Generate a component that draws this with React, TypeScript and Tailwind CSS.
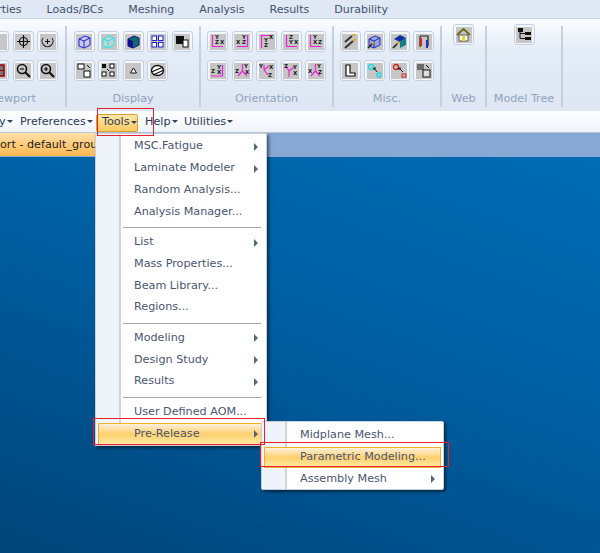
import React from "react";

const F = "font-['DejaVu_Sans',sans-serif]";

function Glyph({ children }: { children?: React.ReactNode }) {
  return (
    <svg viewBox="0 0 15 15" className="w-[15px] h-[15px]" shapeRendering="geometricPrecision">
      {children}
    </svg>
  );
}

function Btn({ children }: { children?: React.ReactNode }) {
  return (
    <div className="w-[21px] h-[21px] shrink-0 rounded-[3px] border border-[#c2d0e4] bg-[#f3f6fb] flex items-center justify-center">
      <div className="w-[16px] h-[16px] bg-[#c6c6c6] flex items-center justify-center">
        <Glyph>{children}</Glyph>
      </div>
    </div>
  );
}

type P = [string, number, number];
function Axis({ l, shape }: { l: P[]; shape: string }) {
  return (
    <>
      <path d={shape} fill="none" stroke="#f020e0" strokeWidth="1.2" />
      {l.map(([t, x, y], i) => (
        <text key={i} x={x} y={y} fontSize="5.5" fontFamily="DejaVu Sans" fontWeight="700" fill="#181818">{t}</text>
      ))}
    </>
  );
}

const cube = (stroke: string, fill: string) => (
  <>
    <path d="M2 5 L8 2 L13 4 L13 11 L7 14 L2 12 Z" fill={fill} stroke={stroke} strokeWidth="1" />
    <path d="M2 5 L7 7 L13 4 M7 7 L7 14" fill="none" stroke={stroke} strokeWidth="1" />
  </>
);

const row1Left = [
  <><circle cx="2" cy="7" r="5" fill="none" stroke="#2030c0" strokeWidth="1.5" /></>,
  <><circle cx="7.5" cy="7.5" r="4" fill="none" stroke="#111" strokeWidth="1.2" /><path d="M7.5 1V14M1 7.5H14" stroke="#111" strokeWidth="1.2" /></>,
  <><path d="M3 4A5.5 5.5 0 1 0 12 4" fill="none" stroke="#333" strokeWidth="1.2" /><path d="M7.5 5V10M5 7.5H10" stroke="#111" strokeWidth="1" /></>,
];
const row2Left = [
  <><rect x="0" y="2" width="13" height="11" fill="#777" stroke="#900" strokeWidth="1.5" /><path d="M0 7.5H13" stroke="#900" /></>,
  <><circle cx="6" cy="6" r="4.5" fill="none" stroke="#111" strokeWidth="1.6" /><path d="M9 9L14 14" stroke="#111" strokeWidth="2.2" /><path d="M4 6H8" stroke="#111" strokeWidth="1.2" /></>,
  <><circle cx="6" cy="6" r="4.5" fill="none" stroke="#111" strokeWidth="1.6" /><path d="M9 9L14 14" stroke="#111" strokeWidth="2.2" /><path d="M4 6H8M6 4V8" stroke="#111" strokeWidth="1.2" /></>,
];

const display1 = [
  cube("#2020e0", "#c8c8e8"),
  cube("#20e8e8", "#c0d4d4"),
  <><path d="M2 5 L8 2 L13 4 L13 11 L7 14 L2 12 Z" fill="#0a6a70" stroke="#101080" /><path d="M2 5 L7 7 L7 14 L2 12 Z" fill="#101090" /></>,
  <><rect x="2" y="2" width="4.5" height="4.5" fill="#fff" stroke="#2020e0" /><rect x="8.5" y="2" width="4.5" height="4.5" fill="#fff" stroke="#2020e0" /><rect x="2" y="8.5" width="4.5" height="4.5" fill="#fff" stroke="#2020e0" /><rect x="8.5" y="8.5" width="4.5" height="4.5" fill="#fff" stroke="#2020e0" /></>,
  <><rect x="1" y="2" width="8" height="8" fill="#111" /><rect x="8" y="6" width="5" height="7" fill="#fff" stroke="#111" /></>,
];
const display2 = [
  <><rect x="1" y="1" width="6" height="5" fill="#fff" stroke="#111" /><rect x="7" y="8" width="6" height="6" fill="#fff" stroke="#111" /><path d="M10 2L13 5" stroke="#111" /></>,
  <><rect x="1" y="1" width="4" height="4" fill="#111" /><rect x="9" y="1" width="4" height="4" fill="#fff" stroke="#111" /><rect x="1" y="9" width="4" height="4" fill="#fff" stroke="#111" /><rect x="9" y="9" width="4" height="4" fill="#fff" stroke="#111" /><path d="M6 6L8 8" stroke="#111" /></>,
  <path d="M7.5 5L10.5 10H4.5Z" fill="#fff" stroke="#111" />,
  <><ellipse cx="7.5" cy="7.5" rx="6" ry="5" fill="#fff" stroke="#111" strokeWidth="1.3" /><path d="M1.5 9L13 4M3 12L14 7" stroke="#111" strokeWidth="1.3" /></>,
];

const orient1 = [
  <Axis l={[["Y", 5, 5], ["Z", 5, 10], ["X", 10, 10]]} shape="M2.5 1V12.5H13" />,
  <Axis l={[["Y", 7, 5], ["X", 1, 10], ["Z", 7, 10]]} shape="M12.5 1V12.5H2" />,
  <Axis l={[["X", 10, 5], ["Y", 5, 8], ["Z", 5, 13]]} shape="M13 1.5H2.5V14" />,
  <Axis l={[["Z", 5, 5], ["Y", 5, 10], ["X", 10, 10]]} shape="M2.5 1V12.5H13" />,
  <Axis l={[["Y", 5, 5], ["X", 5, 10], ["Z", 10, 10]]} shape="M2.5 1V12.5H13" />,
];
const orient2 = [
  <Axis l={[["Y", 7, 6], ["Z", 1, 10], ["X", 7, 11]]} shape="M12.5 2V13H1" />,
  <Axis l={[["Y", 9, 5], ["Z", 0, 10], ["X", 10, 11]]} shape="M7.5 8L3 13M7.5 8L12 13M7.5 8V1" />,
  <Axis l={[["Y", 0, 5], ["X", 10, 6], ["Z", 9, 14]]} shape="M5 7L9 12M5 7V2M5 7L10 3" />,
  <Axis l={[["Z", 0, 5], ["Y", 9, 6], ["X", 9, 12]]} shape="M5 8L2 3M5 8V14M5 8L10 4" />,
  <Axis l={[["Y", 9, 5], ["X", 0, 10], ["Z", 10, 11]]} shape="M7.5 8L3 13M7.5 8L12 13M7.5 8V1" />,
];

const misc1 = [
  <><path d="M2 8L9 2" stroke="#333" strokeWidth="2" /><path d="M9 2L12 0" stroke="#e0a020" strokeWidth="1.6" /><path d="M2 14L10 7" stroke="#333" strokeWidth="2" /><path d="M10 7L13 5" stroke="#e0a020" strokeWidth="1.6" /></>,
  <>{cube("#2030b0", "#9aa4e8")}<path d="M1 14L6 9" stroke="#222" strokeWidth="1.6" /><path d="M5 10L7 8" stroke="#e0a020" strokeWidth="1.8" /></>,
  <><path d="M2 5L8 1L14 4L8 8Z" fill="#1030a0" /><path d="M8 8L14 4V11L8 14Z" fill="#108080" /><path d="M1 14L6 9" stroke="#222" strokeWidth="1.6" /><path d="M5 10L7 8" stroke="#e0a020" strokeWidth="1.8" /></>,
  <><path d="M4 2H12V12" fill="none" stroke="#222" strokeWidth="1.2" /><path d="M4 2V13" stroke="#222" strokeWidth="1.2" /><path d="M5 4V12" stroke="#e02020" strokeWidth="2" /><path d="M11 6V14" stroke="#2030c0" strokeWidth="2" /></>,
];
const misc2 = [
  <path d="M3 2H7V10H12V13H3Z" fill="#fff" stroke="#111" strokeWidth="1.2" />,
  <><circle cx="4" cy="4" r="2.5" fill="none" stroke="#20d8e8" strokeWidth="1.4" /><circle cx="12" cy="12" r="2" fill="none" stroke="#20d8e8" strokeWidth="1.4" /><path d="M7 5L10 9M7 5H9M7 5V7" stroke="#111" /></>,
  <><circle cx="4" cy="4" r="2.5" fill="none" stroke="#d02020" strokeWidth="1.4" /><rect x="10" y="11" width="4" height="3" fill="none" stroke="#d02020" /><path d="M7 5L11 9M7 5H9M7 5V7" stroke="#111" /></>,
  <><path d="M1 2H8M1 4H8M1 6H8" stroke="#111" strokeWidth="1.2" /><rect x="7" y="7" width="7" height="7" fill="#ddd" stroke="#111" /><path d="M10 2L13 5" stroke="#111" /></>,
];

function Group({ label, w, cols, rows }: { label: string; w: string; cols: string; rows: React.ReactNode[][] }) {
  return (
    <div className={"shrink-0 flex flex-col items-center " + w}>
      <div className={"flex-1 flex flex-col " + cols}>
        {rows.map((r, i) => (
          <div key={i} className="flex gap-[3.5px]">
            {r.map((c, j) => (
              <Btn key={j}>{c}</Btn>
            ))}
          </div>
        ))}
      </div>
      <div className="h-[22px] text-[11.2px] leading-[20px] text-[#90a4c0] whitespace-nowrap">{label}</div>
    </div>
  );
}

const Sep = () => <div className="w-[2px] shrink-0 h-[81px] mt-[7px] bg-[#c4d0e0]" />;

const Arrow = () => (
  <span className="w-0 h-0 border-y-[4px] border-y-transparent border-l-[4px] border-l-[#54657f]" />
);

const Caret = () => <span className="ml-[1px] -mt-[1px] w-0 h-0 border-x-[3px] border-x-transparent border-t-[3px] border-t-[#33435c]" />;

function Item({ t, arrow, active }: { t: string; arrow?: boolean; active?: boolean }) {
  return (
    <div className={"flex items-center h-[21.7px] " + (active ? "mx-[2px] bg-[linear-gradient(#fff0dc,#ffd070_50%,#ffe9a0)] border border-[#f0b030] pl-[35px] pr-[5px]" : "pl-[38px] pr-[8px]")}>
      <span className="flex-1 whitespace-nowrap">{t}</span>
      {arrow && <Arrow />}
    </div>
  );
}

const MSep = () => <div className="h-[1px] my-[4px] ml-[27px] mr-[5px] bg-[#a8a8a8]" />;

export default function App() {
  return (
    <div className={"relative w-[600px] h-[553px] overflow-hidden text-[11.2px] text-[#3c4a68] bg-[#e0e8f4] " + F}>
      {/* tabs */}
      <div className="h-[18px] flex items-center bg-[#dfe8f4] text-[11px] text-[#42506c] -ml-[34px] gap-[25px] leading-[18px] pt-[1px]">
        <span>Properties</span>
        <span>Loads/BCs</span>
        <span>Meshing</span>
        <span>Analysis</span>
        <span>Results</span>
        <span>Durability</span>
      </div>
      {/* ribbon */}
      <div className="h-[93px] flex border-t border-[#c8d6e8] bg-[linear-gradient(#fbfdff,#e4ecf7_35%,#dde6f2)]">
        <div className="shrink-0 w-[65px] overflow-hidden flex flex-col items-end">
          <div className="flex-1 flex flex-col gap-[8px] pt-[12px] pr-[7px]">
            <div className="flex gap-[3.5px]">{row1Left.map((c, i) => <Btn key={i}>{c}</Btn>)}</div>
            <div className="flex gap-[3.5px]">{row2Left.map((c, i) => <Btn key={i}>{c}</Btn>)}</div>
          </div>
          <div className="h-[22px] leading-[20px] pr-[29px] text-[#90a4c0] whitespace-nowrap">ewport</div>
        </div>
        <Sep />
        <Group label="Display" w="w-[132px]" cols="gap-[8px] pt-[12px] items-start" rows={[display1, display2]} />
        <Sep />
        <Group label="Orientation" w="w-[131px]" cols="gap-[8px] pt-[12px]" rows={[orient1, orient2]} />
        <Sep />
        <Group label="Misc." w="w-[106px]" cols="gap-[8px] pt-[12px]" rows={[misc1, misc2]} />
        <Sep />
        <Group label="Web" w="w-[43px]" cols="pt-[5px]" rows={[[<>
          <path d="M1 8L7.5 2L14 8" fill="none" stroke="#6a6a10" strokeWidth="1.8" />
          <path d="M3 8H12V14H3Z" fill="#fff" stroke="#555" />
          <rect x="6" y="9" width="3" height="5" fill="#e8d820" />
        </>]]} />
        <Sep />
        <Group label="Model Tree" w="w-[74px]" cols="pt-[5px]" rows={[[<>
          <rect x="1" y="1" width="5" height="4" fill="#111" />
          <rect x="8" y="5" width="6" height="3" fill="#111" />
          <rect x="8" y="10" width="6" height="3" fill="#111" />
          <path d="M3 5V11.5H8M3 6.5H8" fill="none" stroke="#111" />
        </>]]} />
        <Sep />
      </div>
      {/* menu bar */}
      <div className="h-[22px] flex items-center bg-[linear-gradient(#ffffff,#eef3fa)] border-b border-[#b8c8dc] text-[#2e3c58] text-[11.2px] pt-[2px]">
        <span className="flex items-center w-[20px] -ml-[1px]"><span>y</span><Caret /></span>
        <span className="flex items-center w-[77px] pl-[1px]">Preferences<Caret /></span>
        <span className="flex items-center h-[18px] w-[42px] pl-[5px] rounded-[2px] border border-[#d9a030] bg-[linear-gradient(#ffe6a8,#fdc860)]">Tools<Caret /></span>
        <span className="flex items-center w-[46px] pl-[7px]">Help<Caret /></span>
        <span className="flex items-center">Utilities<Caret /></span>
      </div>
      {/* title strip */}
      <div className="h-[24px] flex bg-[#88a8d4]">
        <div className="w-[96px] h-[23px] overflow-hidden flex items-center bg-[linear-gradient(#ffe0a8,#ffb850)] text-[#222] whitespace-nowrap pt-[2px]">
          <span>ort - default_group</span>
        </div>
      </div>
      {/* viewport */}
      <div className="h-[396px] bg-[linear-gradient(200deg,#006cb4_0%,#0060a4_40%,#004478_100%)]" />

      {/* Tools menu */}
      <div className="absolute left-[95px] top-[133px] w-[172px] h-[313px] bg-white border border-[#c8d0dc] shadow-[2px_2px_3px_rgba(0,0,0,0.5)] text-[#4a5672]">
        <div className="absolute left-0 top-0 bottom-0 w-[25px] bg-[#eff4fb] border-r-2 border-[#d4d4d4]" />
        <div className="relative pt-[2px]">
          <Item t="MSC.Fatigue" arrow />
          <Item t="Laminate Modeler" arrow />
          <Item t="Random Analysis..." />
          <Item t="Analysis Manager..." />
          <MSep />
          <Item t="List" arrow />
          <Item t="Mass Properties..." />
          <Item t="Beam Library..." />
          <Item t="Regions..." />
          <MSep />
          <Item t="Modeling" arrow />
          <Item t="Design Study" arrow />
          <Item t="Results" arrow />
          <MSep />
          <Item t="User Defined AOM..." />
          <Item t="Pre-Release" arrow active />
        </div>
      </div>

      {/* Submenu */}
      <div className="absolute left-[261px] top-[421px] w-[183px] h-[69px] bg-white border border-[#c8d0dc] shadow-[2px_2px_3px_rgba(0,0,0,0.5)] text-[#4a5672] rounded-[2px]">
        <div className="absolute left-0 top-0 bottom-0 w-[25px] bg-[#eff4fb] border-r-2 border-[#d4d4d4]" />
        <div className="relative pt-[3px]">
          <Item t="Midplane Mesh..." />
          <Item t="Parametric Modeling..." active />
          <Item t="Assembly Mesh" arrow />
        </div>
      </div>

      {/* annotations */}
      <div className="absolute left-[97px] top-[108px] w-[57px] h-[28px] border border-[#e8202c]" />
      <div className="absolute left-[93px] top-[418px] w-[172px] h-[27px] border border-[#e8202c]" />
      <div className="absolute left-[260px] top-[442px] w-[189px] h-[25px] border border-[#e8202c]" />
    </div>
  );
}
